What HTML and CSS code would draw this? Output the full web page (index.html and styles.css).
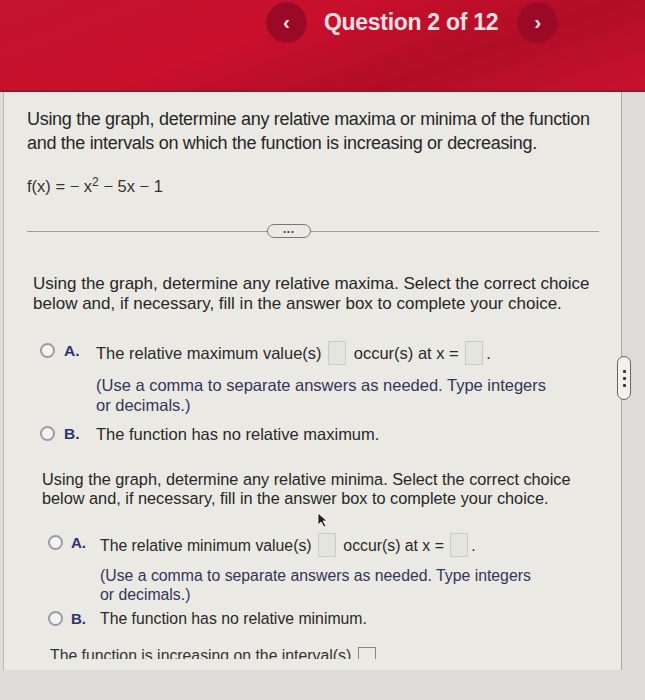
FILE: index.html
```html
<!DOCTYPE html>
<html>
<head>
<meta charset="utf-8">
<link rel="stylesheet" href="styles.css">
</head>
<body>
<header class="topbar">
  <nav class="qnav">
    <span class="navbtn">&#8249;</span>
    <h1 class="qtitle">Question 2 of 12</h1>
    <span class="navbtn">&#8250;</span>
  </nav>
</header>
<main class="panel">
  <section class="question">
    <p class="prompt">Using the graph, determine any relative maxima or minima of the function and the intervals on which the function is increasing or decreasing.</p>
    <p class="formula">f(x) = &minus; x<sup>2</sup> &minus; 5x &minus; 1</p>
  </section>
  <div class="divider"><span class="more">&bull;&bull;&bull;</span></div>
  <section class="part part1">
    <p class="ask">Using the graph, determine any relative maxima. Select the correct choice below and, if necessary, fill in the answer box to complete your choice.</p>
    <div class="choice">
      <span class="radio"></span><span class="letter">A.</span>
      <div class="ctext">
        <div>The relative maximum value(s) <span class="box"></span> occur(s) at x = <span class="box"></span>.</div>
        <div class="hint">(Use a comma to separate answers as needed. Type integers or decimals.)</div>
      </div>
    </div>
    <div class="choice choice-b">
      <span class="radio"></span><span class="letter">B.</span>
      <div class="ctext">The function has no relative maximum.</div>
    </div>
  </section>
  <section class="part part2">
    <p class="ask">Using the graph, determine any relative minima. Select the correct choice below and, if necessary, fill in the answer box to complete your choice.</p>
    <div class="choice">
      <span class="radio"></span><span class="letter">A.</span>
      <div class="ctext">
        <div>The relative minimum value(s) <span class="box"></span> occur(s) at x = <span class="box"></span>.</div>
        <div class="hint">(Use a comma to separate answers as needed. Type integers or decimals.)</div>
      </div>
    </div>
    <div class="choice choice-b">
      <span class="radio"></span><span class="letter">B.</span>
      <div class="ctext">The function has no relative minimum.</div>
    </div>
    <div class="cutwrap"><p class="cut">The function is increasing on the interval(s) <span class="box small"></span></p></div>
  </section>
  <svg class="cursor" width="12" height="16" viewBox="0 0 12 16"><path d="M1 1 L1 13 L4 10 L7 15 L9 14 L6 9 L10 9 Z" fill="#222" stroke="#fff" stroke-width="0.8"/></svg>
  <span class="grip"><i></i><i></i><i></i></span>
</main>
</body>
</html>
```
FILE: styles.css
```css
* { box-sizing: border-box; }
html, body { margin: 0; padding: 0; }
body {
  width: 645px;
  height: 700px;
  overflow: hidden;
  background: #dddcd8;
  font-family: "Liberation Sans", Arial, sans-serif;
  color: #2b2b2b;
}
.topbar {
  height: 92px;
  background: linear-gradient(160deg, #c3142f 0%, #c9102d 40%, #b10d27 70%, #c8122f 100%);
  border-bottom: 2px solid #8e1a2c;
}
.qnav {
  display: flex;
  align-items: center;
  padding-left: 266px;
  padding-top: 2px;
}
.navbtn {
  width: 41px;
  height: 41px;
  border-radius: 50%;
  background: radial-gradient(circle, #9a0a27 60%, #a80d2a 100%);
  color: #f1dde0;
  font-size: 21px;
  font-weight: bold;
  display: flex;
  align-items: center;
  justify-content: center;
  line-height: 1;
  padding-bottom: 3px;
}
.qtitle {
  margin: 0 19px 0 17px;
  font-size: 23px;
  font-weight: bold;
  color: #f1e0e3;
  letter-spacing: -0.3px;
}
.panel {
  position: relative;
  height: 578px;
  margin: 0 23px 0 3px;
  background: #eae9e3;
  border-left: 1px solid #b9b8b4;
  border-right: 1px solid #a9a8a4;
}
.question { padding: 15px 20px 0 23px; }
.prompt {
  margin: 0;
  font-size: 18px;
  line-height: 24px;
  letter-spacing: -0.3px;
  color: #272727;
}
.formula {
  margin: 22px 0 0 0;
  font-size: 16.5px;
  line-height: 19px;
  color: #333;
}
.formula sup { font-size: 12px; line-height: 0; }
.divider {
  margin: 28px 22px 0 23px;
  height: 14px;
  display: flex;
  align-items: center;
  padding-left: 240px;
  background: linear-gradient(#9c9c98, #9c9c98) 0 50% / 100% 1px no-repeat;
}
.more {
  width: 44px;
  height: 14px;
  border: 1px solid #777;
  border-radius: 7px;
  background: #eae9e3;
  font-size: 8px;
  color: #444;
  display: flex;
  align-items: center;
  justify-content: center;
  letter-spacing: 1px;
}
.part { padding: 0 20px 0 29px; }
.part1 { padding-top: 36px; }
.part2 { padding-top: 26px; padding-left: 38px; }
.ask {
  margin: 0 0 27px 0;
  font-size: 17px;
  line-height: 20px;
  color: #272727;
}
.part2 .ask { margin-bottom: 25px; line-height: 19px; font-size: 16.3px; }
.choice {
  display: flex;
  align-items: flex-start;
  margin-left: 7px;
  font-size: 16.5px;
  line-height: 20px;
  color: #2a2a2a;
}
.part2 .choice { font-size: 15.8px; margin-left: 6px; }
.choice-b { margin-top: 9px; }
.part2 .choice-b { margin-top: 5px; }
.radio {
  flex: none;
  width: 15px;
  height: 15px;
  border: 2px solid #999cab;
  border-radius: 50%;
  margin-top: 2px;
  background: #f4f3f0;
}
.letter {
  flex: none;
  width: 41px;
  padding-left: 9px;
  font-weight: bold;
  font-size: 15.5px;
  color: #2c3272;
}
.part2 .letter { width: 37px; padding-left: 8px; font-size: 15px; }
.hint { color: #33365a; margin-top: 10px; max-width: 455px; }
.part2 .hint { margin-top: 9px; line-height: 19px; max-width: 440px; }
.box {
  display: inline-block;
  width: 18px;
  height: 24px;
  vertical-align: -6px;
  background: #e3e6df;
  border: 1px solid #c9ccc6;
  margin: 0 3px 0 2px;
}
.box.small { width: 18px; height: 15px; vertical-align: -1px; background: transparent; border-color: #888; }
.cutwrap {
  margin: 17px 0 0 8px;
  height: 13px;
  overflow: hidden;
}
.cut {
  margin: 0;
  font-size: 15.8px;
  line-height: 20px;
  color: #333;
}
.cursor { position: absolute; left: 313px; top: 420px; }
.grip {
  position: absolute;
  right: -10px;
  top: 264px;
  width: 14px;
  height: 44px;
  border: 1.5px solid #666;
  border-radius: 7px;
  background: #f2f1ec;
  display: flex;
  flex-direction: column;
  align-items: center;
  justify-content: center;
  gap: 4px;
}
.grip i { width: 3px; height: 3px; background: #333; border-radius: 1px; display: block; }
```
